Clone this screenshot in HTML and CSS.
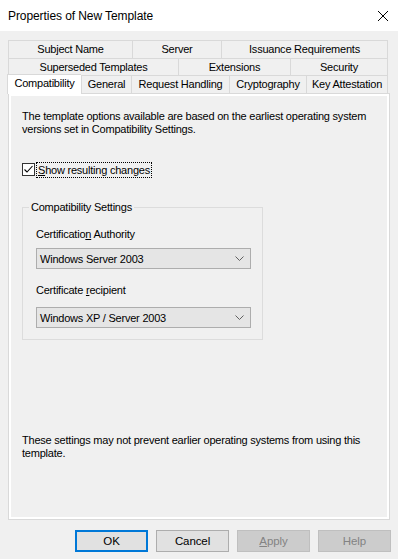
FILE: index.html
```html
<!DOCTYPE html>
<html lang="en">
<head>
  <meta charset="UTF-8">
  <title>Properties of New Template</title>
  <link rel="stylesheet" href="styles.css">
</head>
<body>
  <div class="dialog">
    <div class="titlebar">
      <span class="title">Properties of New Template</span>
      <svg class="close" width="10" height="10" viewBox="0 0 10 10">
        <path d="M0 0 L10 10 M10 0 L0 10" stroke="#000" stroke-width="1"/>
      </svg>
    </div>

    <div class="content">
      <div class="tabs">
        <div class="tab-row row-1">
          <span class="tab">Subject Name</span>
          <span class="tab">Server</span>
          <span class="tab">Issuance Requirements</span>
        </div>
        <div class="tab-row row-2">
          <span class="tab">Superseded Templates</span>
          <span class="tab">Extensions</span>
          <span class="tab">Security</span>
        </div>
        <div class="tab-row row-3">
          <span class="tab active">Compatibility</span>
          <span class="tab">General</span>
          <span class="tab">Request Handling</span>
          <span class="tab">Cryptography</span>
          <span class="tab">Key Attestation</span>
        </div>
      </div>

      <div class="panel">
        <div class="page">
          <p class="intro">The template options available are based on the earliest operating system<br>versions set in Compatibility Settings.</p>

          <label class="check-row">
            <span class="checkbox">
              <svg width="11" height="11" viewBox="0 0 11 11">
                <path d="M1.5 5.5 L4 8 L9.5 2" fill="none" stroke="#000" stroke-width="1.1"/>
              </svg>
            </span>
            <span class="focus"><u>S</u>how resulting changes</span>
          </label>

          <fieldset class="group">
            <legend>Compatibility Settings</legend>
            <div class="field-label first">Certificatio<u>n</u> Authority</div>
            <div class="combo">
              <span>Windows Server 2003</span>
              <svg width="9" height="5" viewBox="0 0 9 5"><path d="M0.5 0.5 L4.5 4.5 L8.5 0.5" fill="none" stroke="#606060"/></svg>
            </div>
            <div class="field-label">Certificate <u>r</u>ecipient</div>
            <div class="combo">
              <span>Windows XP / Server 2003</span>
              <svg width="9" height="5" viewBox="0 0 9 5"><path d="M0.5 0.5 L4.5 4.5 L8.5 0.5" fill="none" stroke="#606060"/></svg>
            </div>
          </fieldset>

          <p class="note">These settings may not prevent earlier operating systems from using this<br>template.</p>
        </div>
      </div>
    </div>

    <div class="buttons">
      <button class="btn default">OK</button>
      <button class="btn">Cancel</button>
      <button class="btn disabled"><u>A</u>pply</button>
      <button class="btn disabled">Help</button>
    </div>
  </div>
</body>
</html>
```

FILE: styles.css
```css
body { margin: 0; background: #f0f0f0; font-family: "Segoe UI", "Liberation Sans", Arial, sans-serif; font-size: 11px; letter-spacing: -0.22px; color: #000; }
u { text-decoration-thickness: 1px; text-underline-offset: 1px; }

.dialog { width: 398px; height: 559px; display: flex; flex-direction: column; }

.titlebar { height: 31px; background: #fff; display: flex; align-items: center; justify-content: space-between; padding: 0 10px 0 8px; }
.title { font-size: 12px; letter-spacing: -0.08px; }

.content { padding: 9px 8px 0 8px; }

.tabs { width: 380px; }
.tab-row { display: grid; }
.row-1 { grid-template-columns: 124px 89px 167px; height: 18px; }
.row-2 { grid-template-columns: 170px 112px 98px; height: 17px; }
.row-3 { grid-template-columns: 73px 50px 98px 77px 82px; height: 18px; }
.tab { border-left: 1px solid #d9d9d9; border-top: 1px solid #d9d9d9; text-align: center; line-height: 16px; white-space: nowrap; }
.tab:last-child { border-right: 1px solid #d9d9d9; }
.tab.active { background: #fff; margin: -1px 0 -1px -1px; position: relative; z-index: 1; line-height: 17px; }

.panel { height: 427px; box-sizing: border-box; border: 1px solid #d9d9d9; background: #fff; padding: 2px; }
.page { height: 100%; box-sizing: border-box; background: #f0f0f0; padding: 14px 11px 0; display: flex; flex-direction: column; }

.intro { margin: 0; line-height: 13px; white-space: nowrap; }

.check-row { display: flex; align-items: center; gap: 2px; margin-top: 27px; height: 13px; }
.checkbox { width: 13px; height: 13px; box-sizing: border-box; border: 1px solid #333; background: #fff; display: flex; }
.focus { outline: 1px dotted #000; padding: 0 1px; line-height: 14px; }

.group { margin: 25px 0 0; width: 241px; box-sizing: border-box; border: 1px solid #dcdcdc; padding: 0 0 11px 13px; min-inline-size: auto; }
.group legend { margin-left: -7px; padding: 0 2px; line-height: 13px; }
.field-label { margin-top: 15px; line-height: 13px; }
.field-label.first { margin-top: 14px; }
.combo { margin-top: 7px; width: 215px; height: 21px; box-sizing: border-box; border: 1px solid #adadad; background: #e5e5e5; padding: 0 6px 0 3px; display: flex; align-items: center; justify-content: space-between; }
.group .combo:last-child { margin-top: 10px; }

.note { margin: auto 0 57px; line-height: 13px; white-space: nowrap; }

.buttons { display: flex; justify-content: flex-end; gap: 8px; padding: 10px 7px 0 0; }
.btn { width: 73px; height: 22px; box-sizing: border-box; padding: 0; font: inherit; font-size: 11.5px; letter-spacing: -0.1px; color: #000; background: #e1e1e1; border: 1px solid #adadad; }
.btn.default { border: 2px solid #0078d7; }
.btn.disabled { background: #cccccc; border-color: #bfbfbf; color: #838383; }
```
